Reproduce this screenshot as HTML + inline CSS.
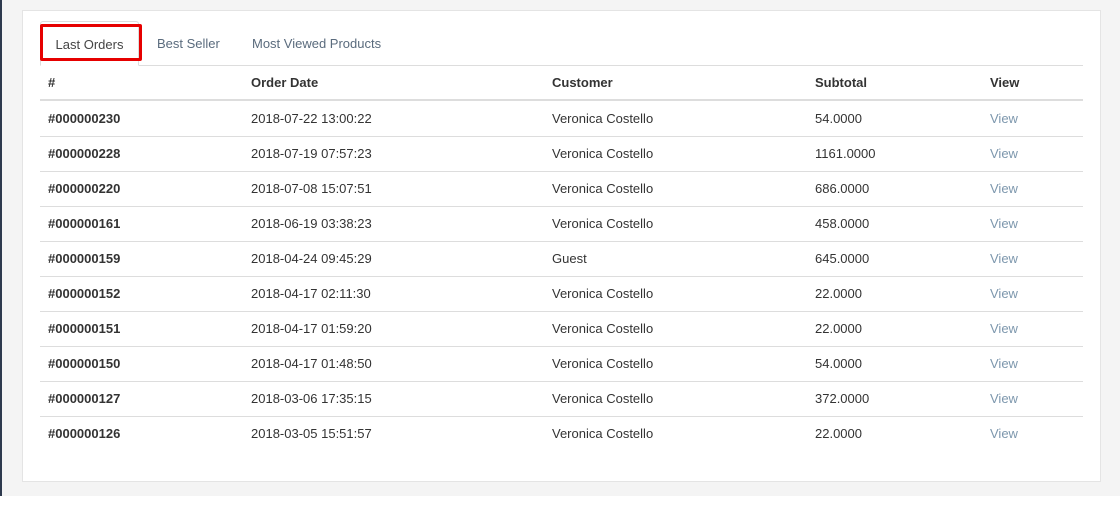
<!DOCTYPE html>
<html><head><meta charset="utf-8"><style>
*{margin:0;padding:0;box-sizing:border-box}
body{width:1120px;height:529px;background:#fff;font-family:"Liberation Sans",Arial,sans-serif;font-size:13px;color:#333;position:relative;overflow:hidden}
.bg{position:absolute;left:0;top:0;width:1120px;height:496px;background:#f4f4f4}
.dark{position:absolute;left:0;top:0;width:2px;height:496px;background:#2e3a4e}
.panel{position:absolute;left:22px;top:10px;width:1079px;height:472px;background:#fff;border:1px solid #e4e4e4}
.tabline{position:absolute;left:40px;top:65px;width:1043px;height:1px;background:#ddd}
.tab{position:absolute;top:22px;height:44px;line-height:44px;color:#5a6b7d}
.active{left:40px;top:21px;height:45px;line-height:46px;width:99px;border:1px solid #ddd;border-bottom:1px solid #fff;border-radius:3px 3px 0 0;background:#fff;text-align:center;color:#444}
.red{position:absolute;left:40px;top:24px;width:102px;height:37px;border:3px solid #e60000;border-radius:2px}
.t{position:absolute;white-space:nowrap}
.h{font-weight:bold;color:#333}
.line{position:absolute;left:40px;width:1043px;height:1px;background:#ddd}
.v{color:#7d97ad}
</style></head><body>
<div class="bg"></div><div class="dark"></div>
<div class="panel"></div>
<div class="tabline"></div>
<div class="tab active">Last Orders</div>
<div class="red"></div>
<div class="tab" style="left:157px">Best Seller</div>
<div class="tab" style="left:252px">Most Viewed Products</div>
<div class="t h" style="left:48px;top:75px">#</div>
<div class="t h" style="left:251px;top:75px">Order Date</div>
<div class="t h" style="left:552px;top:75px">Customer</div>
<div class="t h" style="left:815px;top:75px">Subtotal</div>
<div class="t h" style="left:990px;top:75px">View</div>
<div class="line" style="top:99px;height:2px"></div>
<div id="rows"></div>
<script>
var d=[["#000000230","2018-07-22 13:00:22","Veronica Costello","54.0000"],["#000000228","2018-07-19 07:57:23","Veronica Costello","1161.0000"],["#000000220","2018-07-08 15:07:51","Veronica Costello","686.0000"],["#000000161","2018-06-19 03:38:23","Veronica Costello","458.0000"],["#000000159","2018-04-24 09:45:29","Guest","645.0000"],["#000000152","2018-04-17 02:11:30","Veronica Costello","22.0000"],["#000000151","2018-04-17 01:59:20","Veronica Costello","22.0000"],["#000000150","2018-04-17 01:48:50","Veronica Costello","54.0000"],["#000000127","2018-03-06 17:35:15","Veronica Costello","372.0000"],["#000000126","2018-03-05 15:51:57","Veronica Costello","22.0000"]];
var h="";d.forEach(function(r,i){var y=111+i*35;
h+='<div class="t h" style="left:48px;top:'+y+'px">'+r[0]+'</div><div class="t" style="left:251px;top:'+y+'px">'+r[1]+'</div><div class="t" style="left:552px;top:'+y+'px">'+r[2]+'</div><div class="t" style="left:815px;top:'+y+'px">'+r[3]+'</div><div class="t v" style="left:990px;top:'+y+'px">View</div>';
if(i<9)h+='<div class="line" style="top:'+(136+i*35)+'px"></div>';});
document.getElementById("rows").innerHTML=h;
</script>
</body></html>
